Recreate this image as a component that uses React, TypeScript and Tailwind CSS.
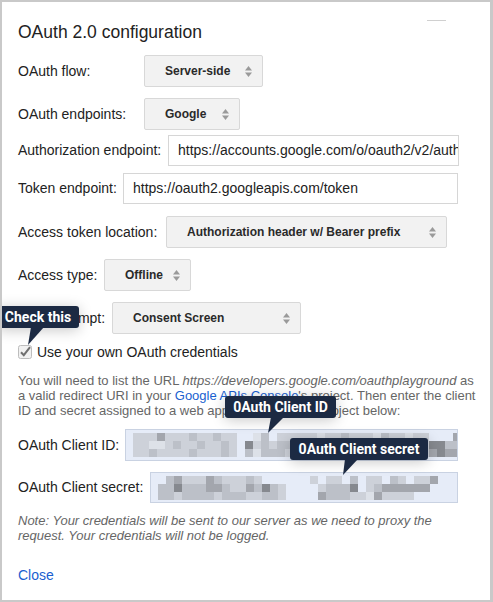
import React from 'react'

// grey shades used by the pixelated (redacted) credential fields
const SHADES: Record<string, string> = {
  '1': '#dde1e8',
  '2': '#cdd1d9',
  '3': '#bcc0c8',
  '4': '#a3a6ad',
  '5': '#86898f',
}

const CLIENT_ID_ROWS = [
  '2224222322322..13.2222212232221322122...4',
  '2211232232232.52323323223223223232232' + '5533',
  '2232222322232.313332' + '32232223322322232' + '4544',
]

const CLIENT_SECRET_ROWS = [
  '.342224322232......2.22.3.22.32.224',
  '3353334432243532....23335.23444444',
  '3323333233322332....433322142222',
]

function Mosaic({ rows, x0, y0 }: { rows: string[]; x0: number; y0: number }) {
  return (
    <svg className="absolute left-0 top-0 h-full w-full" preserveAspectRatio="none">
      {rows.map((row, r) =>
        row.split('').map((ch, c) =>
          SHADES[ch] ? (
            <rect key={`${r}-${c}`} x={x0 + c * 8} y={y0 + r * 8} width={8} height={8} fill={SHADES[ch]} />
          ) : null,
        ),
      )}
    </svg>
  )
}

function Arrows() {
  return (
    <svg width="7" height="11" viewBox="0 0 7 11" className="shrink-0">
      <polygon points="0,4.5 3.5,0 7,4.5" fill="#9a9a9a" />
      <polygon points="0,6.5 3.5,11 7,6.5" fill="#9a9a9a" />
    </svg>
  )
}

function Select({ value, width }: { value: string; width: string }) {
  return (
    <div
      className={`flex h-[32px] ${width} shrink-0 items-center justify-between rounded-[2px] border border-[#d8d8d8] bg-[#f2f2f2] pl-[20px] pr-[10px]`}
    >
      <span className="text-[12px] font-bold text-[#2a2a2a]">{value}</span>
      <Arrows />
    </div>
  )
}

function TextInput({ value, width }: { value: string; width: string }) {
  return (
    <div
      className={`flex h-[31px] ${width} shrink-0 items-center overflow-hidden whitespace-nowrap border border-[#d6d6d6] bg-white pl-[9px] text-[14px] text-[#222]`}
    >
      {value}
    </div>
  )
}

function Tip({ text, box, tail }: { text: string; box: string; tail: string }) {
  return (
    <div
      className={`absolute ${box} h-[22px] rounded-[3px] bg-[#1c2a43] text-center font-['Roboto',Arial,sans-serif] text-[14px] font-bold leading-[22px] text-white shadow-[0_2px_14px_rgba(0,0,0,0.22)]`}
    >
      {text}
      <svg className="absolute left-0 top-[21px] h-[20px] w-full overflow-visible">
        <polygon points={tail} fill="#1c2a43" />
      </svg>
    </div>
  )
}

export default function App() {
  return (
    <div className="relative h-[602px] w-[493px] overflow-hidden border-2 border-r-[3px] border-[#c9c9c9] bg-white font-['Liberation_Sans',Arial,sans-serif] text-[14px] text-[#222]">
      <div className="absolute left-[425px] top-[18px] h-px w-[19px] bg-[#d0d0d0]" />

      <div className="pl-[16px] pt-[19px]">
        <h1 className="h-[22px] text-[17.5px] leading-[22px] text-[#222]">OAuth 2.0 configuration</h1>

        <div className="mt-[12px] flex items-center">
          <span className="w-[126px] shrink-0">OAuth flow:</span>
          <Select value="Server-side" width="w-[119px]" />
        </div>

        <div className="mt-[11px] flex items-center">
          <span className="w-[126px] shrink-0">OAuth endpoints:</span>
          <Select value="Google" width="w-[96px]" />
        </div>

        <div className="mt-[5px] flex items-center">
          <span className="w-[150px] shrink-0">Authorization endpoint:</span>
          <TextInput value="https://accounts.google.com/o/oauth2/v2/auth" width="w-[291px]" />
        </div>

        <div className="mt-[7px] flex items-center">
          <span className="w-[105px] shrink-0">Token endpoint:</span>
          <TextInput value="https://oauth2.googleapis.com/token" width="w-[335px]" />
        </div>

        <div className="mt-[12px] flex items-center">
          <span className="w-[148px] shrink-0">Access token location:</span>
          <Select value="Authorization header w/ Bearer prefix" width="w-[281px]" />
        </div>

        <div className="mt-[11px] flex items-center">
          <span className="w-[86px] shrink-0">Access type:</span>
          <Select value="Offline" width="w-[87px]" />
        </div>

        <div className="mt-[11px] flex items-center">
          <span className="w-[94px] shrink-0 whitespace-nowrap">Force prompt:</span>
          <Select value="Consent Screen" width="w-[189px]" />
        </div>

        <div className="mt-[11px] flex h-[14px] items-center gap-[5px] leading-[14px]">
          <svg width="14" height="14" viewBox="0 0 14 14" className="shrink-0 overflow-visible">
            <rect x="0.5" y="0.5" width="13" height="13" rx="2" fill="#f1f1f1" stroke="#bdbdbd" />
            <path d="M3 7.2 L5.8 10.2 L12 2.2" fill="none" stroke="#707070" strokeWidth="2" />
          </svg>
          <span>Use your own OAuth credentials</span>
        </div>

        <p className="mt-[14px] text-[13px] leading-[15px] text-[#666]">
          You will need to list the URL <i>https://developers.google.com/oauthplayground</i> as
          <br />
          a valid redirect URI in your <span className="text-[#1a5fd0]">Google APIs Console</span>'s project. Then enter the client
          <br />
          ID and secret assigned to a web application on your project below:
        </p>

        <div className="mt-[11px] flex items-center">
          <span className="w-[107px] shrink-0">OAuth Client ID:</span>
          <div className="relative h-[32px] w-[333px] shrink-0 border border-[#c9d2e2] bg-[#e6ecf8]">
            <Mosaic rows={CLIENT_ID_ROWS} x0={7} y0={3} />
          </div>
        </div>

        <div className="mt-[11px] flex items-center">
          <span className="w-[132px] shrink-0">OAuth Client secret:</span>
          <div className="relative h-[31px] w-[308px] shrink-0 border border-[#c9d2e2] bg-[#e6ecf8]">
            <Mosaic rows={CLIENT_SECRET_ROWS} x0={7} y0={3} />
          </div>
        </div>

        <p className="mt-[10px] text-[13px] italic leading-[15px] text-[#666]">
          Note: Your credentials will be sent to our server as we need to proxy the
          <br />
          request. Your credentials will not be logged.
        </p>

        <div className="mt-[24px] leading-[16px] text-[#1a5fd0]">Close</div>
      </div>

      <Tip text="Check this" box="-left-[5px] top-[304px] w-[82px]" tail="34,0 47,0 31,18" />
      <Tip text="0Auth Client ID" box="left-[223px] top-[394px] w-[111px]" tail="46,0 59,0 43,16" />
      <Tip text="0Auth Client secret" box="left-[288px] top-[436px] w-[138px]" tail="55,0 68,0 53,16" />
    </div>
  )
}
